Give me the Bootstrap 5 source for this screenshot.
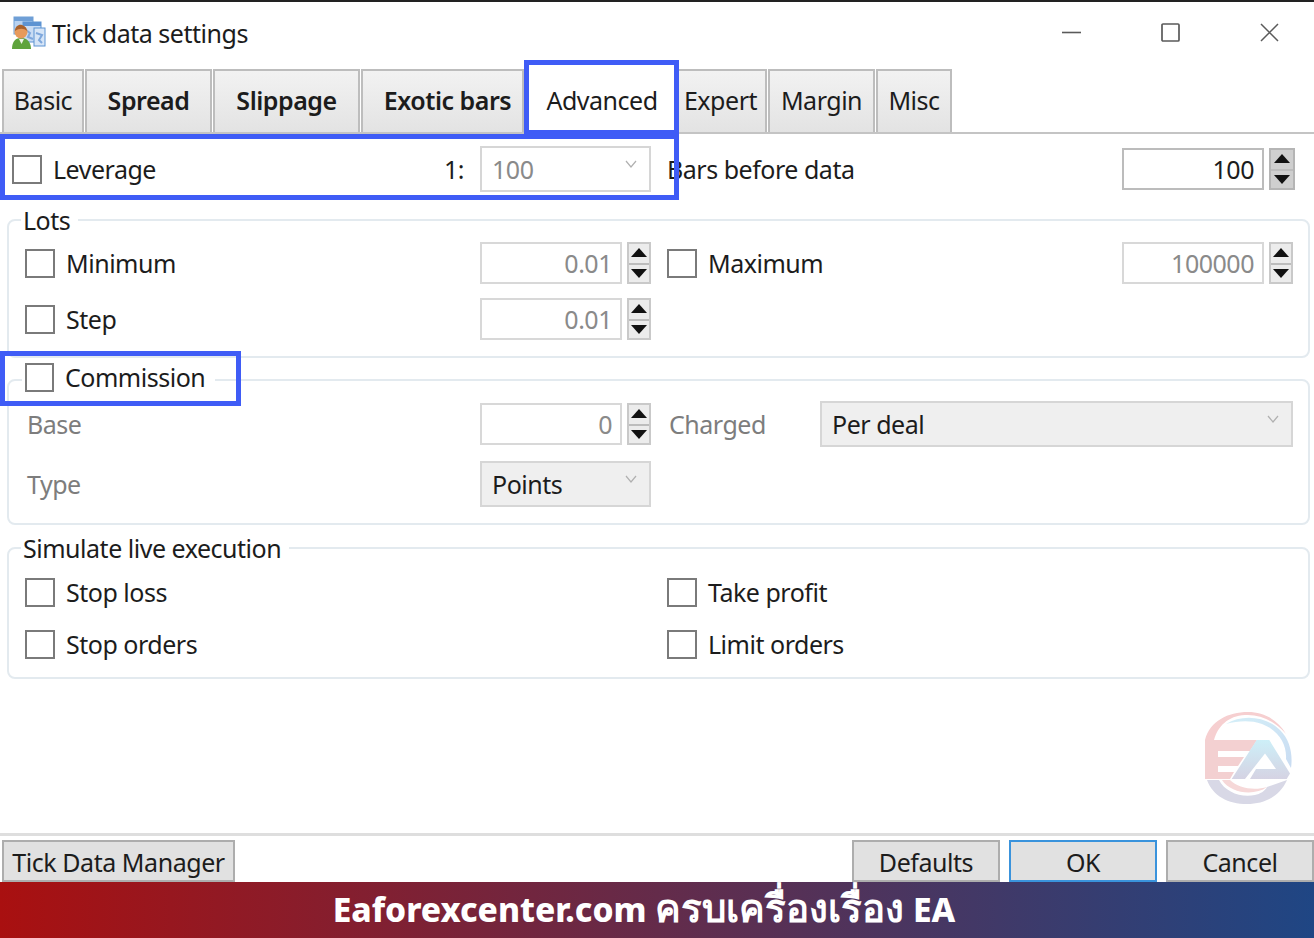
<!DOCTYPE html>
<html lang="en">
<head>
  <meta charset="UTF-8">
  <title>Tick data settings</title>
  <meta name="viewport" content="width=device-width, initial-scale=1">
  <link href="https://cdn.jsdelivr.net/npm/bootstrap@5.3.0/dist/css/bootstrap.min.css" rel="stylesheet">
  <style>
    body { background: #fff; color: #1c1c1c; font-family: "Noto Sans", "Open Sans", sans-serif; font-size: 25px; line-height: 30px; letter-spacing: -.48px; overflow: hidden; }
    .app-window { position: relative; width: 1314px; height: 938px; border-top: 2px solid #222; overflow: hidden; }
    .title-bar { height: 67px; padding: 0 0 6px 11px; }
    .title-text { margin-left: 6px; }
    .win-controls { padding-right: 35px; gap: 80px; }
    .setting-tabs { display: grid; grid-template-columns: 82px 127px 147px 163px 148px 93px 107px 76px; gap: 1px; padding-left: 2px; height: 65px; border-bottom: 2px solid #c4c4c4; flex-wrap: nowrap; }
    .setting-tab { display: flex; align-items: center; justify-content: center; padding-bottom: 4px; background: linear-gradient(#f2f2f2, #e3e3e3); border: 2px solid #bdbdbd; border-bottom: 0; white-space: nowrap; }
    .setting-tab.bold-tab { font-weight: 600; }
    .setting-tab.wide-pad { padding-left: 10px; }
    .setting-tab.current-tab { padding-left: 6px; background: #fff; border-color: #fff; }
    .leverage-row { padding: 12px 21px 0 12px; height: 58px; }
    .leverage-left { width: 468px; }
    .check-box { appearance: none; flex: none; display: block; width: 30px; height: 29px; margin: 0; border: 2px solid #7a7a7a; background: #fff; }
    .field-label { margin-left: 11px; white-space: nowrap; }
    .ratio-label { margin-right: 16px; }
    .sel-box.form-select { width: 171px; height: 46px; padding: 0 10px; border: 2px solid #d6d6d6; border-radius: 0; font-size: 25px; line-height: 42px; letter-spacing: -.48px; color: #1c1c1c; background-color: #fff; background-image: url("data:image/svg+xml,%3csvg xmlns='http://www.w3.org/2000/svg' viewBox='0 0 12 8'%3e%3cpath d='M1 1l5 6 5-6' fill='none' stroke='%23b0b0b0' stroke-width='1.200'/%3e%3c/svg%3e"); background-position: right 12px top 12px; background-size: 12px 8px; opacity: 1; }
    .sel-box.form-select.filled-box { background-color: #efefef; }
    .sel-box.form-select.wide-box { width: 473px; }
    .sel-box.form-select.grey-text { color: #8a8a8a; }
    .spin-wrap { width: 171px; gap: 5px; }
    .num-box.form-control { width: 142px; height: 42px; padding: 0 8px; border: 2px solid #d8d8d8; border-radius: 0; text-align: right; font-size: 25px; letter-spacing: -.48px; color: #8a8a8a; background: #fff; opacity: 1; }
    .num-box.form-control.live-box { border-color: #bcbcbc; color: #1c1c1c; }
    .spin-col { width: 24px; height: 42px; border: 2px solid #c9c9c9; background: #ececec; gap: 2px; }
    .spin-col.live-spin { background: #cfcfcf; border-color: #b5b5b5; width: 26px; margin-right: -2px; }
    .spin-btn { flex: 1; display: flex; align-items: center; justify-content: center; }
    .spin-btn + .spin-btn { border-top: 2px solid #bdbdbd; }
    .tri-up { border-left: 8px solid transparent; border-right: 8px solid transparent; border-bottom: 9px solid #111; }
    .tri-down { border-left: 8px solid transparent; border-right: 8px solid transparent; border-top: 9px solid #111; }
    .group-box { margin: 0 4px 0 7px; border: 2px solid #e3eaef; border-radius: 8px; padding: 7px 15px 16px 16px; min-width: 0; }
    .group-box legend { float: none; width: auto; margin: 0 0 0 -4px; padding: 0 8px 0 2px; font-size: 25px; line-height: 30px; }
    .lots-box { margin-top: 13px; }
    .commission-box { margin-top: 7px; padding-top: 6px; }
    .commission-box legend { display: flex; align-items: center; height: 30px; padding: 0 10px 6px 3px; margin-left: -3px; }
    .commission-box .check-box { width: 29px; }
    .simulate-box { margin-top: 8px; padding-top: 14px; padding-bottom: 18px; }
    .form-lines { display: grid; grid-template-columns: 439px 171px 1fr; column-gap: 16px; row-gap: 14px; align-items: center; }
    .opt-lines { display: grid; grid-template-columns: 642px 1fr; row-gap: 22px; }
    .tail-right { justify-content: space-between; }
    .off-label { color: #7d7d7d; margin-left: 2px; }
    .charged-label { width: 151px; }
    .spacer-fill { flex: 1; }
    .foot-bar { border-top: 3px solid #dedede; padding: 4px 0 0 2px; height: 49px; }
    .foot-btn.btn { height: 42px; padding: 0; border: 2px solid #adadad; border-radius: 0; background: #e1e1e1; color: #1c1c1c; font-size: 25px; line-height: 40px; letter-spacing: -.45px; }
    .foot-btn.manager-btn { width: 233px; }
    .foot-btn.small-btn { width: 148px; }
    .foot-btn.btn.ok-btn { border-color: #3a93dc; }
    .foot-right { gap: 9px; }
    .promo-bar { height: 56px; padding-right: 26px; background: linear-gradient(90deg, #a91010 0%, #1f4684 100%); color: #fff; font-size: 33.5px; font-weight: 800; line-height: 50px; letter-spacing: 0; text-align: center; white-space: nowrap; }
    .promo-thai { font-size: 38.5px; }
    .mark-box { position: absolute; border: 5px solid #3f5cf6; pointer-events: none; }
    .mark-tab { left: 524px; top: 58px; width: 155px; height: 75px; }
    .mark-leverage { left: 0; top: 132px; width: 679px; height: 66px; }
    .mark-commission { left: 0; top: 349px; width: 241px; height: 55px; }
    .water-logo { position: absolute; left: 1200px; top: 704px; width: 100px; height: 100px; }
  </style>
</head>
<body>
  <div class="app-window d-flex flex-column">
    <!-- title bar -->
    <div class="title-bar d-flex align-items-center">
      <svg width="35" height="34" viewBox="0 0 35 34">
        <rect x="3" y="1" width="19" height="17" fill="#b9d2f0" stroke="#6f9fd6"/>
        <rect x="3" y="1" width="19" height="4" fill="#6f9fd6"/>
        <rect x="12" y="6" width="18" height="20" fill="#c9dcf4" stroke="#5d93d2"/>
        <rect x="12" y="6" width="18" height="4" fill="#5d93d2"/>
        <rect x="23" y="12" width="11" height="18" fill="#d6e5f7" stroke="#5d93d2"/>
        <path d="M15 14l4 3-2 4 5 2M25 17l6 2-3 5 3 3" fill="none" stroke="#7ea7dc" stroke-width="2"/>
        <path d="M1 33c0-8 4-11 9-11s10 3 10 11z" fill="#5fa33c"/>
        <path d="M8 23l2.500 5 2.500-5z" fill="#eef3e8"/>
        <circle cx="10" cy="16" r="6.500" fill="#e79a5c"/>
        <path d="M4 15c0-5 4-7 7-6s5 3 5 6c-3-3-8-3-12 0z" fill="#a8612c"/>
      </svg>
      <span class="title-text">Tick data settings</span>
      <div class="win-controls d-flex align-items-center ms-auto">
        <svg width="19" height="19" viewBox="0 0 19 19"><path d="M0 9.500h19" stroke="#5a5a5a" stroke-width="1.600"/></svg>
        <svg width="19" height="19" viewBox="0 0 19 19"><rect x="1" y="1" width="17" height="17" rx="1" fill="none" stroke="#5a5a5a" stroke-width="1.700"/></svg>
        <svg width="19" height="19" viewBox="0 0 19 19"><path d="M1 1l17 17M18 1L1 18" stroke="#5a5a5a" stroke-width="1.500"/></svg>
      </div>
    </div>

    <!-- tabs -->
    <div class="setting-tabs nav">
      <div class="setting-tab">Basic</div>
      <div class="setting-tab bold-tab">Spread</div>
      <div class="setting-tab bold-tab">Slippage</div>
      <div class="setting-tab bold-tab wide-pad">Exotic bars</div>
      <div class="setting-tab current-tab">Advanced</div>
      <div class="setting-tab">Expert</div>
      <div class="setting-tab">Margin</div>
      <div class="setting-tab">Misc</div>
    </div>

    <!-- leverage -->
    <div class="leverage-row d-flex align-items-center">
      <div class="leverage-left d-flex align-items-center">
        <input class="check-box" type="checkbox" disabled>
        <span class="field-label">Leverage</span>
        <span class="ratio-label ms-auto">1:</span>
      </div>
      <select class="sel-box form-select grey-text" disabled><option>100</option></select>
      <span class="field-label ms-3">Bars before data</span>
      <div class="spin-wrap d-flex align-items-center ms-auto">
        <input class="num-box form-control live-box" type="text" value="100">
        <div class="spin-col live-spin d-flex flex-column"><span class="spin-btn"><i class="tri-up"></i></span><span class="spin-btn"><i class="tri-down"></i></span></div>
      </div>
    </div>

    <!-- lots -->
    <fieldset class="group-box lots-box">
      <legend>Lots</legend>
      <div class="form-lines">
        <div class="d-flex align-items-center"><input class="check-box" type="checkbox" disabled><span class="field-label">Minimum</span></div>
        <div class="spin-wrap d-flex"><input class="num-box form-control" type="text" value="0.01" disabled><div class="spin-col d-flex flex-column"><span class="spin-btn"><i class="tri-up"></i></span><span class="spin-btn"><i class="tri-down"></i></span></div></div>
        <div class="d-flex align-items-center tail-right">
          <div class="d-flex align-items-center"><input class="check-box" type="checkbox" disabled><span class="field-label">Maximum</span></div>
          <div class="spin-wrap d-flex"><input class="num-box form-control" type="text" value="100000" disabled><div class="spin-col d-flex flex-column"><span class="spin-btn"><i class="tri-up"></i></span><span class="spin-btn"><i class="tri-down"></i></span></div></div>
        </div>
        <div class="d-flex align-items-center"><input class="check-box" type="checkbox" disabled><span class="field-label">Step</span></div>
        <div class="spin-wrap d-flex"><input class="num-box form-control" type="text" value="0.01" disabled><div class="spin-col d-flex flex-column"><span class="spin-btn"><i class="tri-up"></i></span><span class="spin-btn"><i class="tri-down"></i></span></div></div>
        <div></div>
      </div>
    </fieldset>

    <!-- commission -->
    <fieldset class="group-box commission-box">
      <legend><input class="check-box" type="checkbox" disabled><span class="field-label">Commission</span></legend>
      <div class="form-lines">
        <div class="off-label">Base</div>
        <div class="spin-wrap d-flex"><input class="num-box form-control" type="text" value="0" disabled><div class="spin-col d-flex flex-column"><span class="spin-btn"><i class="tri-up"></i></span><span class="spin-btn"><i class="tri-down"></i></span></div></div>
        <div class="d-flex align-items-center">
          <div class="off-label charged-label">Charged</div>
          <select class="sel-box form-select filled-box wide-box" disabled><option>Per deal</option></select>
        </div>
        <div class="off-label">Type</div>
        <select class="sel-box form-select filled-box" disabled><option>Points</option></select>
        <div></div>
      </div>
    </fieldset>

    <!-- live execution -->
    <fieldset class="group-box simulate-box">
      <legend>Simulate live execution</legend>
      <div class="opt-lines">
        <div class="d-flex align-items-center"><input class="check-box" type="checkbox" disabled><span class="field-label">Stop loss</span></div>
        <div class="d-flex align-items-center"><input class="check-box" type="checkbox" disabled><span class="field-label">Take profit</span></div>
        <div class="d-flex align-items-center"><input class="check-box" type="checkbox" disabled><span class="field-label">Stop orders</span></div>
        <div class="d-flex align-items-center"><input class="check-box" type="checkbox" disabled><span class="field-label">Limit orders</span></div>
      </div>
    </fieldset>

    <div class="spacer-fill"></div>

    <!-- footer buttons -->
    <div class="foot-bar d-flex">
      <button class="foot-btn manager-btn btn" type="button">Tick Data Manager</button>
      <div class="foot-right d-flex ms-auto">
        <button class="foot-btn small-btn btn" type="button">Defaults</button>
        <button class="foot-btn small-btn ok-btn btn" type="button">OK</button>
        <button class="foot-btn small-btn btn" type="button">Cancel</button>
      </div>
    </div>
    <div class="promo-bar">Eaforexcenter.com <span class="promo-thai">ครบเครื่องเรื่อง</span> EA</div>

    <!-- highlight frames and watermark sit over the dialog -->
    <div class="mark-box mark-tab"></div>
    <div class="mark-box mark-leverage"></div>
    <div class="mark-box mark-commission"></div>
    <svg class="water-logo" viewBox="0 0 100 100">
      <defs>
        <linearGradient id="waterA" x1="0" y1="0" x2="0" y2="1"><stop offset="0" stop-color="#cdeff8"/><stop offset="1" stop-color="#d5d3e3"/></linearGradient>
        <linearGradient id="waterB" x1="0" y1="0" x2="1" y2="1"><stop offset="0" stop-color="#d4eff8"/><stop offset="1" stop-color="#c9dcf2"/></linearGradient>
      </defs>
      <path d="M5 34C10 15 28 6 48 6c16 0 30 8 38 22C75 15 60 8 45 9 28 10 18 20 14 34z" fill="#f6cfd0"/>
      <path d="M26 18c16-10 40-8 54 6 10 10 13 24 11 38l-5-9C87 38 78 24 62 18c-12-4-24-3-36 0z" fill="url(#waterB)"/>
      <path d="M5 34h52L50 45H18v6h26l-6 9H18v6h16l-4 7H5z" fill="#f3d0d1"/>
      <path d="M31.700 73 56.700 34H69.300L90 67.500 86.700 73H50L56 63H76L65 47.500 45 73z" fill="url(#waterA)"/>
      <path d="M7 74h12c6 12 22 18 36 15 5-1 10-4 12-8l20-7C80 90 65 98 47 98 28 98 13 90 7 74z" fill="#d8d8e6"/>
      <path d="M22 74h8c8 8 24 11 37 7-12 9-36 7-45-7z" fill="#f6d8d8"/>
    </svg>
  </div>
  <script src="https://cdn.jsdelivr.net/npm/bootstrap@5.3.0/dist/js/bootstrap.bundle.min.js"></script>
</body>
</html>
